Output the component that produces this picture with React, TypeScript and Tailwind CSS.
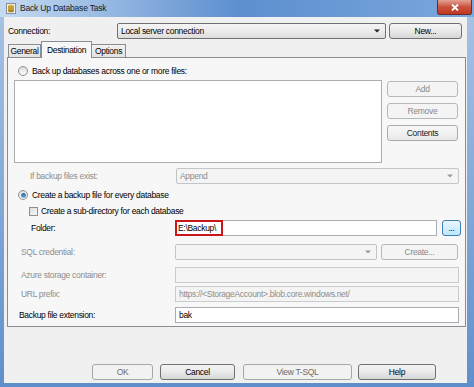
import React from "react";

type BtnProps = {
  label: string;
  w: string;
  h?: string;
  disabled?: boolean;
  focused?: boolean;
  soft?: boolean;
  className?: string;
};

const Btn = ({ label, w, h = "h-[16px]", disabled, focused, soft, className = "" }: BtnProps) => {
  let look =
    "border-[#707070] bg-linear-to-b from-[#f4f4f4] via-[#e9e9e9] to-[#d6d6d6] text-black";
  if (soft) look = "border-[#a9acaf] bg-linear-to-b from-[#f8f8f8] to-[#e9e9e9] text-[#222]";
  if (disabled) look = "border-[#b5b9bc] bg-[#f4f4f4] text-[#8a8a8a]";
  if (focused) look = "border-[#3c7fb1] bg-linear-to-b from-[#eaf6fd] to-[#bee6fd] text-black";
  return (
    <div
      className={`${w} ${h} ${look} ${className} flex shrink-0 items-center justify-center rounded-[3px] border leading-none`}
    >
      {label}
    </div>
  );
};

const Arrow = ({ dim }: { dim?: boolean }) => (
  <svg width="6" height="4" viewBox="0 0 6 4" className="shrink-0">
    <path d="M0 0.5h6L3 3.5z" fill={dim ? "#9a9a9a" : "#222"} />
  </svg>
);

const Combo = ({ w, text, disabled }: { w: string; text?: string; disabled?: boolean }) => (
  <div
    className={`${w} h-[16px] shrink-0 flex items-center justify-between rounded-[2px] border pl-[3px] pr-[5px] leading-none ${
      disabled
        ? "border-[#c3c6c9] bg-[#f4f4f4] text-[#8d8d8d]"
        : "border-[#707070] bg-linear-to-b from-[#f4f4f4] via-[#ececec] to-[#dcdcdc] text-black"
    }`}
  >
    <span>{text}</span>
    <Arrow dim={disabled} />
  </div>
);

const Field = ({ w, text, disabled }: { w: string; text?: string; disabled?: boolean }) => (
  <div
    className={`${w} h-[16px] shrink-0 flex items-center border pl-[3px] leading-none ${
      disabled ? "border-[#c9cbce] bg-[#f4f4f4] text-[#8d8d8d]" : "border-[#abadb3] bg-white text-black"
    }`}
  >
    {text}
  </div>
);

const Radio = ({ on }: { on?: boolean }) => (
  <div className="flex h-[10px] w-[10px] shrink-0 items-center justify-center rounded-full border border-[#8e8f8f] bg-linear-to-b from-[#dcdcdc] to-[#fdfdfd]">
    {on && <div className="h-[5px] w-[5px] rounded-full bg-linear-to-b from-[#2a628d] to-[#6fb0e6]" />}
  </div>
);

export default function App() {
  return (
    <div className="flex h-[387px] w-[474px] flex-col overflow-hidden bg-linear-to-b from-[#a9c4e4] to-[#5f8fcb] font-['Liberation_Sans',Arial,sans-serif] text-[8.5px] tracking-[-0.3px] text-black">
      {/* title bar */}
      <div className="flex h-[17px] shrink-0 items-center bg-linear-to-r from-[#c6dbf1] via-[#5d8fcf] to-[#7aa7dc]">
        <svg width="10" height="11" viewBox="0 0 10 11" className="ml-[6px]">
          <rect x="0.5" y="0.5" width="9" height="10" fill="#eef1f4" stroke="#8a8f96" />
          <ellipse cx="5" cy="3" rx="3" ry="1.2" fill="#d9b640" />
          <rect x="2" y="3" width="6" height="5" fill="#c9a233" />
          <ellipse cx="5" cy="8" rx="3" ry="1.2" fill="#a88420" />
        </svg>
        <span className="ml-[4px] text-[8.5px] tracking-[-0.2px] text-[#1a1a1a]">Back Up Database Task</span>
        <div className="ml-auto mr-[2px] flex h-[15px] w-[35px] items-center justify-center self-start rounded-b-[3px] border border-t-0 border-[#6e2a22] bg-linear-to-b from-[#e4a195] via-[#c9503d] to-[#c2371f]">
          <svg width="8" height="7" viewBox="0 0 8 7">
            <path d="M1 0.5L7 6.5M7 0.5L1 6.5" stroke="white" strokeWidth="1.8" />
          </svg>
        </div>
      </div>

      {/* client area */}
      <div className="ml-[4px] flex h-[366px] w-[463px] flex-col bg-[#f0f0f0]">
        {/* connection */}
        <div className="mt-[6px] flex h-[16px] items-center">
          <span className="ml-[4px] w-[109px]">Connection:</span>
          <Combo w="w-[269px]" text="Local server connection" />
          <Btn label="New..." w="w-[73px]" className="ml-[3px]" />
        </div>

        {/* tabs */}
        <div className="ml-[4px] mt-[3px] flex h-[16px] items-end">
          <div className="flex h-[14px] w-[33px] items-center justify-center border border-b-0 border-[#898c95] bg-linear-to-b from-[#f2f2f2] to-[#e0e0e0]">
            General
          </div>
          <div className="relative z-10 flex h-[17px] w-[51px] items-center justify-center border border-b-0 border-[#898c95] bg-[#f7f7f7]">
            Destination
          </div>
          <div className="flex h-[14px] w-[34px] items-center justify-center border border-b-0 border-l-0 border-[#898c95] bg-linear-to-b from-[#f2f2f2] to-[#e0e0e0]">
            Options
          </div>
        </div>

        {/* tab panel */}
        <div className="-mt-px ml-[3px] flex h-[270px] w-[459px] flex-col border border-[#898c95] bg-[#f7f7f7]">
          <div className="mt-[5px] flex h-[16px] items-center">
            <div className="ml-[10px]">
              <Radio />
            </div>
            <span className="ml-[4px]">Back up databases across one or more files:</span>
          </div>

          <div className="mt-px flex">
            <div className="ml-[6px] h-[83px] w-[368px] border border-[#abadb3] bg-white" />
            <div className="ml-[5px] mt-px flex flex-col gap-[6px]">
              <Btn label="Add" w="w-[71px]" disabled />
              <Btn label="Remove" w="w-[71px]" disabled />
              <Btn label="Contents" w="w-[71px]" soft />
            </div>
          </div>

          <div className="mt-[5px] flex h-[16px] items-center">
            <span className="ml-[22px] w-[146px] text-[#8d8d8d]">If backup files exist:</span>
            <Combo w="w-[283px]" text="Append" disabled />
          </div>

          <div className="mt-[3px] flex h-[16px] items-center">
            <div className="ml-[10px]">
              <Radio on />
            </div>
            <span className="ml-[4px]">Create a backup file for every database</span>
          </div>

          <div className="flex h-[16px] items-center">
            <div className="ml-[21px] h-[9px] w-[9px] border border-[#8e8f8f] bg-linear-to-br from-[#dcdcdc] to-[#fbfbfb]" />
            <span className="ml-[3px]">Create a sub-directory for each database</span>
          </div>

          <div className="mt-px flex h-[16px] items-center">
            <span className="ml-[23px] w-[144px]">Folder:</span>
            <div className="flex h-[16px] w-[262px] items-center border border-[#abadb3] bg-white">
              <div className="-ml-px flex h-[16px] w-[48px] items-center border-2 border-[#c8161d] pl-[1px] leading-none">
                E:\Backup\
              </div>
            </div>
            <Btn label="..." w="w-[19px]" focused className="ml-[5px] items-end pb-[3px]" />
          </div>

          <div className="mt-[8px] flex h-[16px] items-center">
            <span className="ml-[13px] w-[154px] text-[#8d8d8d]">SQL credential:</span>
            <Combo w="w-[202px]" disabled />
            <Btn label="Create..." w="w-[77px]" disabled className="ml-[4px]" />
          </div>

          <div className="mt-[7px] flex h-[16px] items-center">
            <span className="ml-[13px] w-[154px] text-[#8d8d8d]">Azure storage container:</span>
            <Field w="w-[284px]" disabled />
          </div>

          <div className="mt-[3px] flex h-[16px] items-center">
            <span className="ml-[13px] w-[154px] text-[#8d8d8d]">URL prefix:</span>
            <Field w="w-[284px]" text="https://<StorageAccount>.blob.core.windows.net/" disabled />
          </div>

          <div className="mt-[5px] flex h-[16px] items-center">
            <span className="ml-[11px] w-[156px]">Backup file extension:</span>
            <Field w="w-[284px]" text="bak" />
          </div>
        </div>

        {/* bottom buttons */}
        <div className="mt-[37px] flex h-[16px] items-center">
          <Btn label="OK" w="w-[61px]" disabled className="ml-[88px] !border-[#a7a7a7] !bg-[#f2f2f2] !text-[#6a6a6a]" />
          <Btn label="Cancel" w="w-[75px]" className="ml-[7px]" />
          <Btn label="View T-SQL" w="w-[109px]" disabled className="ml-[8px] !border-[#a7a7a7] !bg-[#f2f2f2] !text-[#6a6a6a]" />
          <Btn label="Help" w="w-[78px]" className="ml-[6px]" />
        </div>
      </div>
    </div>
  );
}
